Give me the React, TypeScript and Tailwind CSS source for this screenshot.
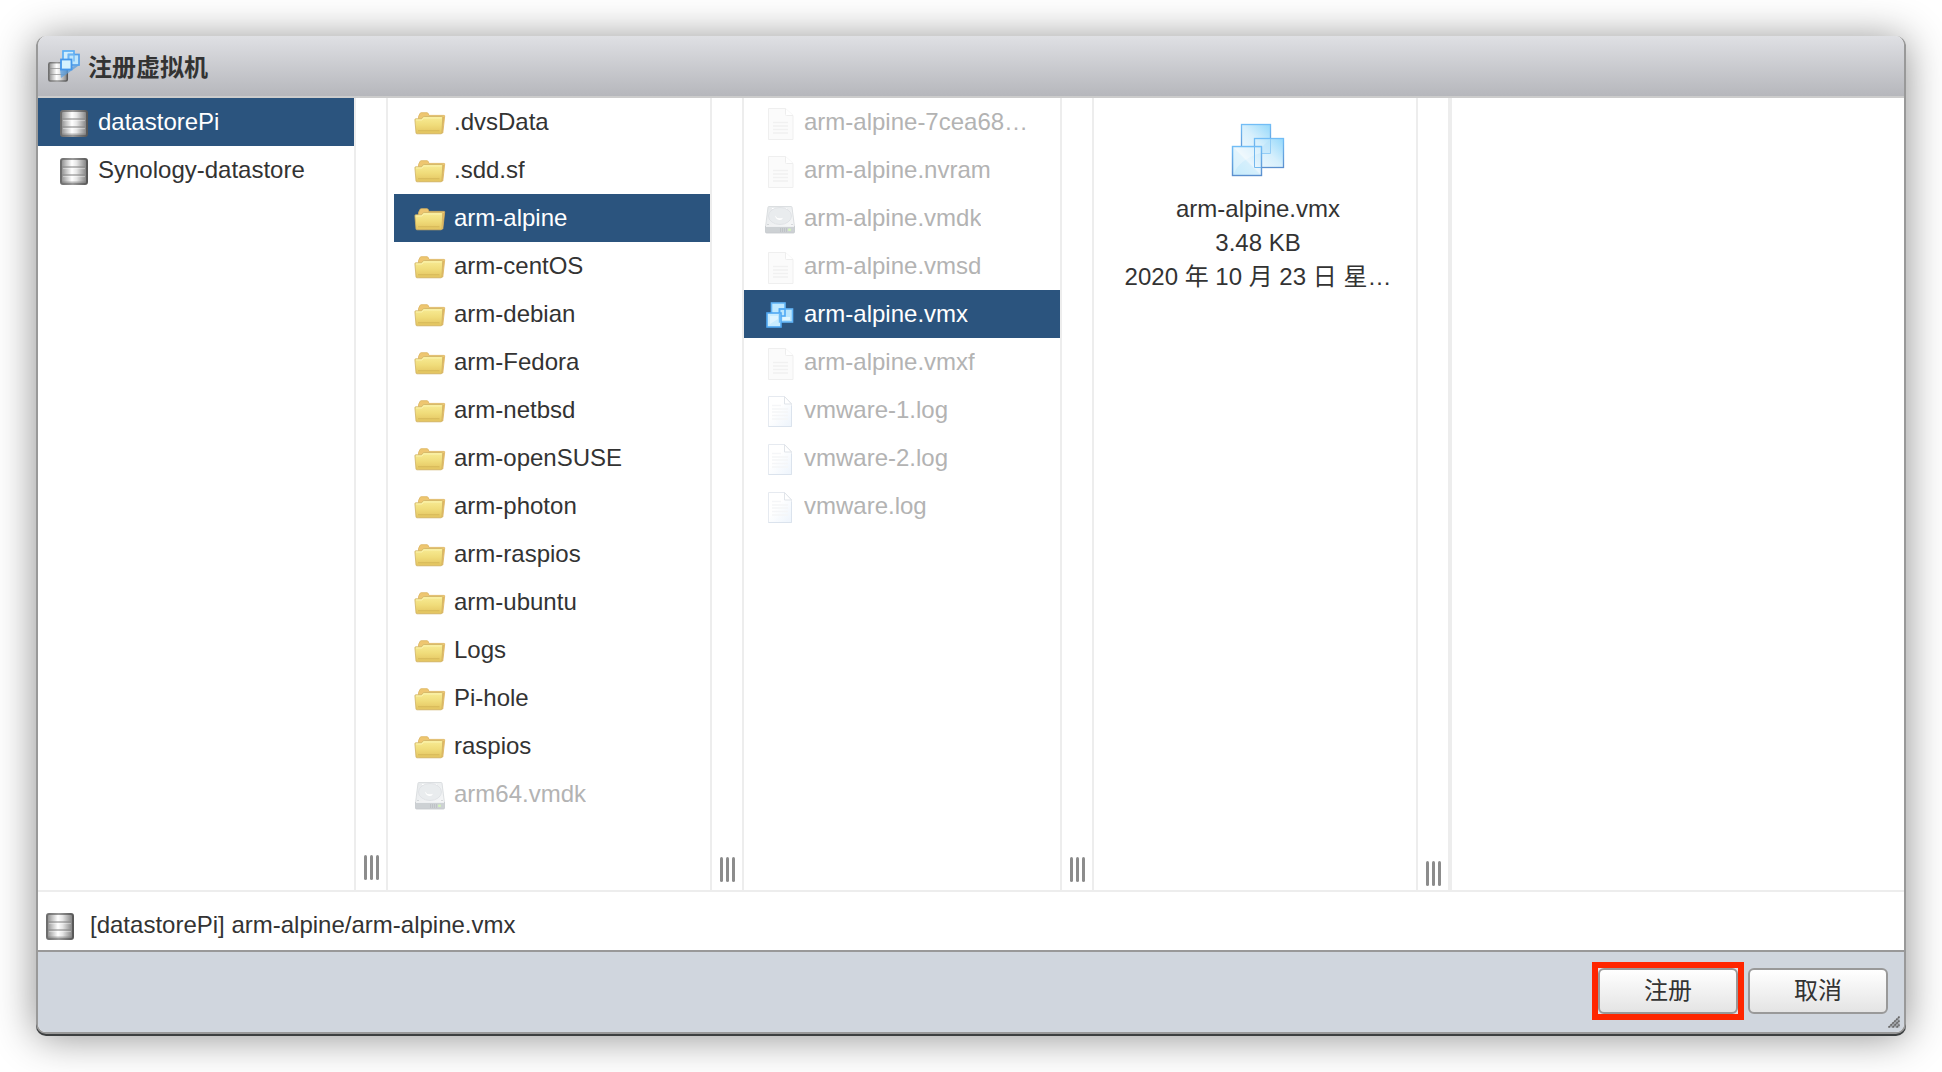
import { useState, type ReactNode } from 'react'
import { clsx } from 'clsx'

type Kind = 'datastore' | 'folder' | 'file' | 'log' | 'disk' | 'vm'

interface Item {
  name: string
  kind: Kind
  disabled?: boolean
}

const DATASTORES: Item[] = [
  { name: 'datastorePi', kind: 'datastore' },
  { name: 'Synology-datastore', kind: 'datastore' },
]

const FOLDERS: Item[] = [
  { name: '.dvsData', kind: 'folder' },
  { name: '.sdd.sf', kind: 'folder' },
  { name: 'arm-alpine', kind: 'folder' },
  { name: 'arm-centOS', kind: 'folder' },
  { name: 'arm-debian', kind: 'folder' },
  { name: 'arm-Fedora', kind: 'folder' },
  { name: 'arm-netbsd', kind: 'folder' },
  { name: 'arm-openSUSE', kind: 'folder' },
  { name: 'arm-photon', kind: 'folder' },
  { name: 'arm-raspios', kind: 'folder' },
  { name: 'arm-ubuntu', kind: 'folder' },
  { name: 'Logs', kind: 'folder' },
  { name: 'Pi-hole', kind: 'folder' },
  { name: 'raspios', kind: 'folder' },
  { name: 'arm64.vmdk', kind: 'disk', disabled: true },
]

const FILES: Item[] = [
  { name: 'arm-alpine-7cea68…', kind: 'file', disabled: true },
  { name: 'arm-alpine.nvram', kind: 'file', disabled: true },
  { name: 'arm-alpine.vmdk', kind: 'disk', disabled: true },
  { name: 'arm-alpine.vmsd', kind: 'file', disabled: true },
  { name: 'arm-alpine.vmx', kind: 'vm' },
  { name: 'arm-alpine.vmxf', kind: 'file', disabled: true },
  { name: 'vmware-1.log', kind: 'log', disabled: true },
  { name: 'vmware-2.log', kind: 'log', disabled: true },
  { name: 'vmware.log', kind: 'log', disabled: true },
]

// shared gradients, referenced by id from every icon
function IconDefs() {
  return (
    <svg width="0" height="0" className="absolute" aria-hidden="true">
      <defs>
        <linearGradient id="metal" x1="0" x2="1">
          <stop offset="0" stopColor="#8a8a8a" />
          <stop offset="0.2" stopColor="#c4c4c4" />
          <stop offset="0.42" stopColor="#ffffff" />
          <stop offset="0.6" stopColor="#e6e6e6" />
          <stop offset="1" stopColor="#7c7c7c" />
        </linearGradient>
        <linearGradient id="metalEdge" x1="0" x2="1" gradientUnits="objectBoundingBox">
          <stop offset="0" stopColor="#6c6c6c" />
          <stop offset="0.45" stopColor="#9a9a9a" />
          <stop offset="1" stopColor="#585858" />
        </linearGradient>
        <linearGradient id="folderFront" x1="0" y1="0" x2="0" y2="1">
          <stop offset="0" stopColor="#f8ec95" />
          <stop offset="0.5" stopColor="#f0dc7a" />
          <stop offset="1" stopColor="#e3c35f" />
        </linearGradient>
        <linearGradient id="glass" x1="0" y1="1" x2="1" y2="0">
          <stop offset="0" stopColor="#c4ebfc" />
          <stop offset="0.48" stopColor="#d5effc" />
          <stop offset="0.52" stopColor="#e9f6fd" />
          <stop offset="1" stopColor="#c3e7fb" />
        </linearGradient>
        <linearGradient id="glassBack" x1="0" y1="1" x2="1" y2="0">
          <stop offset="0" stopColor="#f1f9fe" />
          <stop offset="0.5" stopColor="#d6effc" />
          <stop offset="1" stopColor="#93d8fb" />
        </linearGradient>
        <linearGradient id="glassEdge" x1="0" y1="0" x2="0" y2="1">
          <stop offset="0" stopColor="#72bdf6" />
          <stop offset="1" stopColor="#5b8fce" />
        </linearGradient>
        <linearGradient id="diskTop" x1="0" y1="0" x2="1" y2="1">
          <stop offset="0" stopColor="#e6e9eb" />
          <stop offset="1" stopColor="#f6f7f8" />
        </linearGradient>
        <linearGradient id="logPage" x1="0" y1="0" x2="1" y2="1">
          <stop offset="0.4" stopColor="#ffffff" />
          <stop offset="1" stopColor="#edf4fc" />
        </linearGradient>
      </defs>
    </svg>
  )
}

function DatastoreIcon() {
  return (
    <svg width="32" height="32" viewBox="0 0 32 32" className="shrink-0" aria-hidden="true">
      <rect x="3" y="3" width="26" height="25" rx="2" fill="url(#metal)" stroke="url(#metalEdge)" strokeWidth="2" />
      <path d="M4 11h24M4 19h24" stroke="#8c8c8c" strokeWidth="1.5" opacity="0.75" />
      <path d="M5 12.6h22M5 20.6h22" stroke="#fff" strokeWidth="1" opacity="0.4" />
      <path d="M4 26.2h24" stroke="#777" strokeWidth="1.4" opacity="0.5" />
    </svg>
  )
}

function FolderIcon() {
  return (
    <svg width="32" height="32" viewBox="0 0 32 32" className="shrink-0" aria-hidden="true">
      <path d="M4.5 8.5L6 5.5Q6.3 4.700 7.200 4.700H13q.8 0 1.200.8l.7 1.900H30.200q.6 0 .5.700L28.800 25H5z" fill="#eec670" stroke="#dbb25c" strokeWidth="0.8" />
      <path d="M27 9h3l-1.800 14z" fill="#d3a955" opacity="0.6" />
      <path d="M.9 11.800q-.1-1 .9-1H7.600l1.300-1.700q.5-.6 1.200-.6H27.800q1 0 .9 1L27.900 25q-.1.800-1 .8H3q-.9 0-1-.8z" fill="url(#folderFront)" stroke="#cfb264" strokeWidth="0.8" />
      <path d="M2 12H8l1.500-2H27.500" fill="none" stroke="#fdf6b8" strokeWidth="0.8" />
      <path d="M4 22.700H25.500" stroke="#d0b052" strokeWidth="1.2" opacity="0.6" />
    </svg>
  )
}

function FileIcon() {
  return (
    <svg width="32" height="32" viewBox="0 0 32 32" className="shrink-0" aria-hidden="true">
      <path d="M4.5.5H21.500L29 7.500V31.500H4.500z" fill="#fbfbfb" stroke="#efefef" />
      <path d="M21.500.5v6q0 1 1 1H29" fill="#fff" stroke="#eee" />
      <path d="M9 14.500H24M9 18H24M9 21.500H24M9 25H24" stroke="#f1f1f1" strokeWidth="1.4" />
    </svg>
  )
}

function LogIcon() {
  return (
    <svg width="32" height="32" viewBox="0 0 32 32" className="shrink-0" aria-hidden="true">
      <path d="M4.500.5H20.500L27.500 7.500V30.500H4.500z" fill="url(#logPage)" stroke="#e6eaf0" />
      <path d="M4.500 30.500H27.500V10" fill="none" stroke="#dbe3ed" />
      <path d="M20.500.5V8H27.500z" fill="#fff" stroke="#e1e5ea" />
      <path d="M8 9.500H17M8 13H24M8 16H24M8 19.500H24M8 23H24" stroke="#f5f6f8" strokeWidth="1.3" />
    </svg>
  )
}

function DiskIcon() {
  return (
    <svg width="32" height="32" viewBox="0 0 32 32" className="shrink-0" aria-hidden="true">
      <path d="M4.800 2.500H27.200q.7 0 .8.700L30.500 23H1.500L4 3.200q.1-.7.800-.7z" fill="url(#diskTop)" stroke="#d8dbde" strokeWidth="0.9" />
      <path d="M8 4.500H23" stroke="#fff" strokeWidth="1.2" />
      <ellipse cx="16" cy="12" rx="11.500" ry="8.500" fill="#e9ecee" stroke="#dde0e3" strokeWidth="0.8" />
      <path d="M11 11.500q2 4 8 2.200-1 2.800-4.500 2-3-.8-3.500-4.200z" fill="#fff" />
      <path d="M1.500 22.500H30.500V28q0 1-1 1H2.500q-1 0-1-1z" fill="#cdd1d4" stroke="#c4c8cc" strokeWidth="0.8" />
      <path d="M2 22.300H30" stroke="#f8f9fa" strokeWidth="1" />
      <path d="M16.500 24v4M18.500 24v4M20.500 24v4M22.500 24v4" stroke="#b9bdc1" strokeWidth="0.7" />
      <rect x="24" y="24.500" width="3" height="2.500" rx="1" fill="#d4f3bb" />
      <path d="M3.500 20.500h1M27.500 20.500h1" stroke="#b9bdc1" />
    </svg>
  )
}

function VmIcon() {
  return (
    <svg width="32" height="32" viewBox="0 0 32 32" className="shrink-0" aria-hidden="true">
      <rect x="7.500" y="3" width="13.500" height="13" fill="#bfe8fe" stroke="#62b5f7" strokeWidth="1.6" />
      <rect x="15.500" y="9" width="13" height="13" fill="#b9e5fd" stroke="#62b5f7" strokeWidth="1.6" />
      <rect x="3" y="13" width="14" height="14" fill="#c9ecfe" stroke="#4fa8f3" strokeWidth="1.6" />
      <path d="M15.500 13V9H21v7h-4" fill="none" stroke="#4ea8f4" strokeWidth="1.6" />
      <path d="M15.500 14v8H17" fill="none" stroke="#6cbcf7" strokeWidth="1.4" />
      <rect x="18.500" y="17" width="7.500" height="3" fill="#dff5ff" />
      <path d="M6 16h8v3l-8 5z" fill="#e4f6ff" opacity="0.8" />
    </svg>
  )
}

function VmLargeIcon() {
  return (
    <svg width="64" height="64" viewBox="0 0 64 64" aria-hidden="true">
      <rect x="15.500" y="6.500" width="29" height="29" fill="url(#glassBack)" stroke="url(#glassEdge)" strokeWidth="1.3" />
      <rect x="28.500" y="20.500" width="29" height="29" fill="url(#glassBack)" stroke="url(#glassEdge)" strokeWidth="1.3" />
      <path d="M29 35.500H44.500V21" fill="#b7e2fa" fillOpacity="0.5" stroke="#8cc9f5" strokeWidth="0.9" />
      <rect x="6.500" y="28.500" width="29" height="29" fill="url(#glass)" stroke="url(#glassEdge)" strokeWidth="1.4" />
      <path d="M8 55.500Q13 42 34.500 35V30H8z" fill="#fff" opacity="0.3" />
      <path d="M28.500 29V49.500H35" fill="none" stroke="#74b9ef" strokeWidth="1" />
    </svg>
  )
}

function RegisterIcon() {
  return (
    <svg width="32" height="32" viewBox="0 0 32 32" className="shrink-0" aria-hidden="true">
      <rect x="0.800" y="12.800" width="18.500" height="18.200" rx="1.500" fill="url(#metal)" stroke="url(#metalEdge)" strokeWidth="1.5" />
      <path d="M1.500 18.500h17M1.500 24.500h17" stroke="#8c8c8c" strokeWidth="1" opacity="0.7" />
      <path d="M12 19L31.500 15 13 28z" fill="#5a9fe0" opacity="0.75" />
      <rect x="15" y="1" width="11" height="10.500" fill="#cfedfd" stroke="#5aaef5" strokeWidth="1.7" />
      <rect x="20.500" y="4.500" width="10.500" height="10.500" fill="#bfe6fc" stroke="#559fe9" strokeWidth="1.7" />
      <path d="M20.500 10V4.500H26V11.500" fill="none" stroke="#6bb6f5" strokeWidth="1.3" />
      <rect x="13" y="9.500" width="10.500" height="10" fill="#d5f2fe" stroke="#4597ea" strokeWidth="1.8" />
    </svg>
  )
}

const ICONS: Record<Kind, () => ReactNode> = {
  datastore: DatastoreIcon,
  folder: FolderIcon,
  file: FileIcon,
  log: LogIcon,
  disk: DiskIcon,
  vm: VmIcon,
}

interface ListProps {
  label: string
  items: Item[]
  selected: string
  onSelect: (name: string) => void
}

function List({ label, items, selected, onSelect }: ListProps) {
  return (
    <ul aria-label={label} className="w-[316px]">
      {items.map(item => {
        const Icon = ICONS[item.kind]
        return (
          <li key={item.name}>
            <button
              type="button"
              disabled={item.disabled}
              onClick={() => onSelect(item.name)}
              className={clsx(
                'flex items-center gap-2 w-full h-12 px-5 text-left',
                item.name === selected && 'bg-[#2b547e] text-white',
                item.disabled && 'text-[#b3b3b3]'
              )}
            >
              <span className="pt-1"><Icon /></span>
              <span className="truncate">{item.name}</span>
            </button>
          </li>
        )
      })}
    </ul>
  )
}

function Resizer({ className }: { className?: string }) {
  return (
    <div
      role="separator"
      aria-orientation="vertical"
      className={clsx('flex items-end justify-center gap-[3px] w-[34px] shrink-0 border-x-2 border-[#ededed] cursor-col-resize', className)}
    >
      {[0, 1, 2].map(i => (
        <span key={i} className="w-[3px] h-[25px] rounded-sm bg-[#8c8c8c]" />
      ))}
    </div>
  )
}

export default function App() {
  const [datastore, setDatastore] = useState('datastorePi')
  const [folder, setFolder] = useState('arm-alpine')
  const [file, setFile] = useState('arm-alpine.vmx')

  const buttonClass = 'w-[140px] h-[46px] rounded-md border-2 border-[#999] bg-linear-to-b from-white to-[#e4e4e4] cursor-pointer'

  return (
    <div className="flex min-h-screen bg-white px-9 pt-9 pb-[38px] text-2xl text-[#333] font-['Liberation_Sans','Noto_Sans_CJK_SC',sans-serif]">
      <IconDefs />
      <div
        role="dialog"
        aria-labelledby="title"
        className="flex flex-col flex-1 min-w-0 overflow-hidden rounded-[10px] border-2 border-t-0 border-[#999] bg-white shadow-[0_2px_0_#3c3f40,0_3px_42px_rgba(0,0,0,0.45)]"
      >
        <header className="flex items-center gap-2 h-[62px] px-[10px] shrink-0 border-b-2 border-[#ccc] bg-linear-to-b from-[#dfe0e4] to-[#b6b7bc]">
          <RegisterIcon />
          <h1 id="title" className="pt-1 font-bold">注册虚拟机</h1>
        </header>

        <main className="flex flex-1 border-b-2 border-[#ededed]">
          <List label="数据存储" items={DATASTORES} selected={datastore} onSelect={setDatastore} />
          <Resizer className="pb-[10px]" />
          <div className="pl-[6px]">
            <List label="文件夹" items={FOLDERS} selected={folder} onSelect={setFolder} />
          </div>
          <Resizer className="pb-2" />
          <List label="文件" items={FILES} selected={file} onSelect={setFile} />
          <Resizer className="pb-2" />
          <div className="pl-[6px]">
            <div className="flex flex-col items-center w-[316px] pt-5 px-5 text-center leading-[34px]">
              <VmLargeIcon />
              <p className="pt-[10px]">{file}</p>
              <p>3.48 KB</p>
              <p className="whitespace-nowrap">2020 年 10 月 23 日 星…</p>
            </div>
          </div>
          <Resizer className="pb-1" />
          <div className="flex-1 border-l-2 border-[#ededed]" />
        </main>

        <div className="flex items-center gap-[14px] h-[60px] pt-2 px-[6px] shrink-0 border-b-2 border-[#999]">
          <span className="pt-1"><DatastoreIcon /></span>
          <span>[{datastore}] {folder}/{file}</span>
        </div>

        <footer className="relative flex items-start justify-end gap-[10px] h-20 pt-4 pr-4 shrink-0 bg-[#d0d6de]">
          <span className="flex bg-[#e6e3ea] outline-6 outline-[#ff2600]">
            <button type="button" className={buttonClass}>注册</button>
          </span>
          <button type="button" className={buttonClass}>取消</button>
          <svg width="12" height="12" viewBox="0 0 12 12" className="absolute right-1 bottom-1 cursor-nwse-resize" aria-hidden="true">
            <path d="M0 11.500L11.500 0V11.500z" fill="#a4a8ad" />
            <path d="M.5 11.500L11.500.5M4.500 11.500l7-7M8.500 11.500l3-3" stroke="#666" strokeWidth="1.6" strokeDasharray="2 0.7" />
          </svg>
        </footer>
      </div>
    </div>
  )
}
